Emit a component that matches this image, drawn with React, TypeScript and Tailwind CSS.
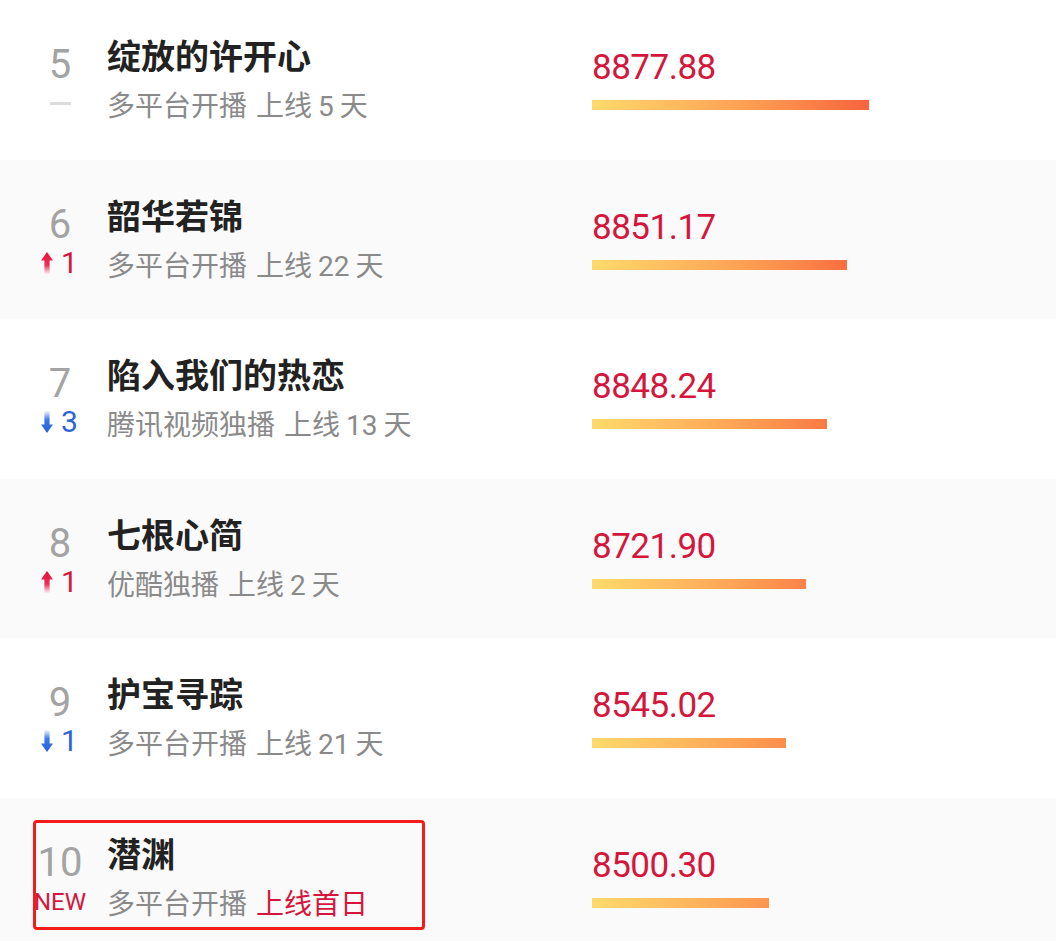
import React from "react";

type Change = { kind: "same" } | { kind: "up"; n: number } | { kind: "down"; n: number } | { kind: "new" };

const rows: {
  rank: number;
  title: string;
  platform: string;
  days: string;
  score: string;
  bar: number;
  change: Change;
  highlight?: boolean;
}[] = [
  { rank: 5, title: "绽放的许开心", platform: "多平台开播", days: "5", score: "8877.88", bar: 277, change: { kind: "same" } },
  { rank: 6, title: "韶华若锦", platform: "多平台开播", days: "22", score: "8851.17", bar: 255, change: { kind: "up", n: 1 } },
  { rank: 7, title: "陷入我们的热恋", platform: "腾讯视频独播", days: "13", score: "8848.24", bar: 235, change: { kind: "down", n: 3 } },
  { rank: 8, title: "七根心简", platform: "优酷独播", days: "2", score: "8721.90", bar: 214, change: { kind: "up", n: 1 } },
  { rank: 9, title: "护宝寻踪", platform: "多平台开播", days: "21", score: "8545.02", bar: 194, change: { kind: "down", n: 1 } },
  { rank: 10, title: "潜渊", platform: "多平台开播", days: "", score: "8500.30", bar: 177, change: { kind: "new" }, highlight: true },
];

function UpArrow() {
  return (
    <svg width="12" height="22" viewBox="0 0 12 22">
      <defs>
        <linearGradient id="arrow-up" x1="0" y1="0" x2="0" y2="1">
          <stop offset="0" stopColor="#e50f3b" />
          <stop offset="0.6" stopColor="#ec2f55" />
          <stop offset="1" stopColor="#ef3a5c" stopOpacity="0.05" />
        </linearGradient>
      </defs>
      <path d="M6 0 L12 8.5 H8.6 V22 H3.4 V8.5 H0 Z" fill="url(#arrow-up)" />
    </svg>
  );
}

function DownArrow() {
  return (
    <svg width="12" height="22" viewBox="0 0 12 22">
      <defs>
        <linearGradient id="arrow-down" x1="0" y1="0" x2="0" y2="1">
          <stop offset="0" stopColor="#3a78e6" stopOpacity="0.05" />
          <stop offset="0.4" stopColor="#3a78e6" />
          <stop offset="1" stopColor="#2361da" />
        </linearGradient>
      </defs>
      <path d="M6 22 L12 13.5 H8.6 V0 H3.4 V13.5 H0 Z" fill="url(#arrow-down)" />
    </svg>
  );
}

function ChangeTag({ change }: { change: Change }) {
  if (change.kind === "same") {
    return <div className="mt-[16px] h-[3px] w-[21px] bg-[#dcdcdc]" />;
  }
  if (change.kind === "new") {
    return <div className="mt-[3px] text-[24px] leading-[30px] text-[#d5163c]">NEW</div>;
  }
  const up = change.kind === "up";
  return (
    <div className="mt-[2px] flex items-center gap-[8px] pr-[1px]">
      {up ? <UpArrow /> : <DownArrow />}
      <span className={`text-[30px] leading-[30px] ${up ? "text-[#d5163c]" : "text-[#2c64d6]"}`}>{change.n}</span>
    </div>
  );
}

export default function App() {
  return (
    <div className="w-[1056px] h-[941px] overflow-hidden bg-white font-['Roboto','Noto_Sans_CJK_SC',sans-serif]">
      {rows.map((r, i) => (
        <div
          key={r.rank}
          className={`relative flex h-[159.6px] ${i % 2 === 1 ? "bg-[#fafafa]" : "bg-white"}`}
        >
          <div className="flex w-[107px] flex-col items-center pl-[15px] pr-[2px] pt-[44px]">
            <div className="text-[40px] leading-[42px] text-[#a3a3a3]">{r.rank}</div>
            <ChangeTag change={r.change} />
          </div>

          <div className="flex w-[485px] flex-col pt-[37px]">
            <div className="text-[34px] font-bold leading-[40px] text-[#222]">{r.title}</div>
            <div className="mt-[12px] text-[28px] leading-[36px] text-[#8a8a8a]">
              {r.platform}
              <span className="ml-[9px]" />
              {r.days ? (
                <>
                  上线<span className="mx-[6px]">{r.days}</span>天
                </>
              ) : (
                <span className="text-[#d5163c]">上线首日</span>
              )}
            </div>
          </div>

          <div className="flex flex-col pt-[47px]">
            <div className="text-[35px] leading-[42px] tracking-[-0.5px] text-[#d5163c]">{r.score}</div>
            <div
              className="mt-[11px] h-[10px] bg-linear-to-r from-[#ffda6b] via-[#fca556] to-[#f7613c] bg-size-[280px_100%]"
              style={{ width: r.bar }}
            />
          </div>

          {r.highlight && (
            <div className="absolute left-[33px] top-[22px] h-[110px] w-[392px] rounded-[4px] border-[3px] border-[#f51b1b]" />
          )}
        </div>
      ))}
    </div>
  );
}
